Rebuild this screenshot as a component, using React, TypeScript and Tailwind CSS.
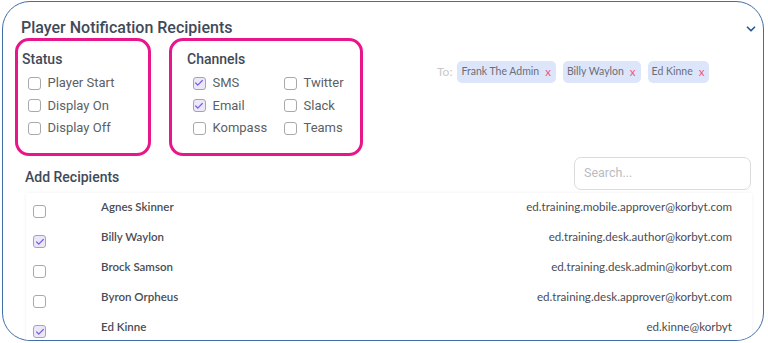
import { Check, ChevronDown } from 'lucide-react'

interface Option {
  label: string
  checked?: boolean
}

interface Recipient {
  name: string
  email: string
  checked?: boolean
}

const STATUS: Option[] = [{ label: 'Player Start' }, { label: 'Display On' }, { label: 'Display Off' }]

const CHANNELS_LEFT: Option[] = [{ label: 'SMS', checked: true }, { label: 'Email', checked: true }, { label: 'Kompass' }]
const CHANNELS_RIGHT: Option[] = [{ label: 'Twitter' }, { label: 'Slack' }, { label: 'Teams' }]

const SELECTED = ['Frank The Admin', 'Billy Waylon', 'Ed Kinne']

const RECIPIENTS: Recipient[] = [
  { name: 'Agnes Skinner', email: 'ed.training.mobile.approver@korbyt.com' },
  { name: 'Billy Waylon', email: 'ed.training.desk.author@korbyt.com', checked: true },
  { name: 'Brock Samson', email: 'ed.training.desk.admin@korbyt.com' },
  { name: 'Byron Orpheus', email: 'ed.training.desk.approver@korbyt.com' },
  { name: 'Ed Kinne', email: 'ed.kinne@korbyt', checked: true },
]

function Box({ checked }: { checked?: boolean }) {
  return (
    <span
      className={
        checked
          ? 'flex h-[13px] w-[13px] shrink-0 items-center justify-center rounded-[3px] border-[1.5px] border-[#a7a3b3] bg-[#ece8f8]'
          : 'flex h-[13px] w-[13px] shrink-0 items-center justify-center rounded-[3px] border-[1.5px] border-[#a9a9a9] bg-white'
      }
    >
      {checked && <Check className="h-[10px] w-[10px] text-[#7b5cf0]" strokeWidth={3} />}
    </span>
  )
}

function OptionList({ items }: { items: Option[] }) {
  return (
    <div className="flex flex-col gap-[8.5px]">
      {items.map((o) => (
        <div key={o.label} className="flex h-[14px] items-center gap-[7px]">
          <Box checked={o.checked} />
          <span className="whitespace-nowrap text-[13px] text-[#5b5f66]">{o.label}</span>
        </div>
      ))}
    </div>
  )
}

export default function App() {
  return (
    <div className="h-[343px] w-[768px] bg-white font-['Roboto',sans-serif]">
      <div className="ml-[2px] mt-[1px] h-[340px] w-[762px] overflow-hidden rounded-[28px] border-[1.5px] border-[#3f6ea6] bg-white">
        <div className="flex h-[36px] items-end justify-between pl-[18px] pr-[5px]">
          <h1 className="text-[16px] font-medium leading-[20px] text-[#3f4a58]">Player Notification Recipients</h1>
          <ChevronDown className="mb-[2px] h-[14px] w-[14px] text-[#2b5a93]" strokeWidth={3} />
        </div>

        <div className="flex pl-[12px]">
          <div className="h-[118px] w-[136px] shrink-0 rounded-[14px] border-[3px] border-[#e8168a] pl-[4px] pt-[10px]">
            <div className="text-[14px] font-medium leading-[16px] text-[#3f4a58]">Status</div>
            <div className="ml-[5.5px] mt-[9px]">
              <OptionList items={STATUS} />
            </div>
          </div>

          <div className="ml-[18px] h-[118px] w-[194px] shrink-0 rounded-[14px] border-[3px] border-[#e8168a] pl-[15px] pt-[10px]">
            <div className="text-[14px] font-medium leading-[16px] text-[#3f4a58]">Channels</div>
            <div className="ml-[5.5px] mt-[9px] flex gap-[20px]">
              <div className="w-[71px]">
                <OptionList items={CHANNELS_LEFT} />
              </div>
              <OptionList items={CHANNELS_RIGHT} />
            </div>
          </div>

          <div className="ml-[74px] mt-[23px] flex h-[22px] items-center gap-[4px] font-['Lato',sans-serif] text-[10.5px]">
            <span className="mr-[1px] text-[12px] text-[#c9c9c9]">To:</span>
            {SELECTED.map((s) => (
              <span key={s} className="mr-[3px] flex h-[22px] items-center gap-[6px] rounded-[5px] bg-[#dde5fa] pl-[4px] pr-[5px] text-[#6b6e78]">
                {s}
                <span className="text-[11.5px] text-[#f0557a]">x</span>
              </span>
            ))}
          </div>
        </div>

        <div className="flex items-end justify-between pl-[22px] pr-[12px] pt-[1px]">
          <h2 className="pb-[5px] text-[14px] font-medium leading-[16px] text-[#3f4a58]">Add Recipients</h2>
          <div className="flex h-[33px] w-[177px] items-center rounded-[7px] border border-[#dcdcdc] px-[9px] text-[12.5px] text-[#b9bcc2]">
            Search...
          </div>
        </div>

        <div className="ml-[23px] mr-[11px] mt-[3px] bg-white font-['Lato',sans-serif] shadow-[0_0_4px_rgba(0,0,0,0.06)]">
          {RECIPIENTS.map((r) => (
            <div key={r.name} className="flex h-[30px] items-center pl-[7px] pr-[20px]">
              <div className="mt-[7px]">
                <Box checked={r.checked} />
              </div>
              <span className="mb-[2px] ml-[55px] text-[11.5px] font-semibold text-[#4a4d55]">{r.name}</span>
              <span className="mb-[2px] ml-auto text-[11.6px] text-[#4a4d55]">{r.email}</span>
            </div>
          ))}
        </div>
      </div>
    </div>
  )
}
